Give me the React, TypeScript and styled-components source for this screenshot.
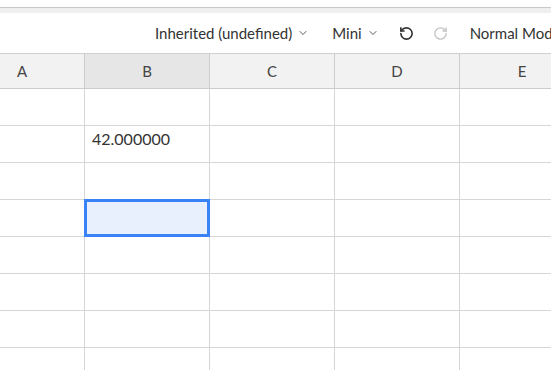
import React from 'react';
import styled, { createGlobalStyle } from 'styled-components';
import { ChevronDown, RotateCcw, RotateCw } from 'lucide-react';

const GlobalStyle = createGlobalStyle`
  html, body {
    margin: 0;
    padding: 0;
    background: #ffffff;
    overflow: hidden;
  }
  body {
    font-family: Lato, "Liberation Sans", sans-serif;
    color: #333333;
  }
`;

const Page = styled.div`
  width: 551px;
  height: 370px;
  overflow: hidden;
  display: flex;
  flex-direction: column;
`;

const TopStrip = styled.div`
  height: 7px;
  border-bottom: 1px solid #c9c9c9;
  background: #ffffff;
  flex-shrink: 0;
`;

const Band = styled.div`
  height: 5px;
  background: #efefef;
  flex-shrink: 0;
`;

const Toolbar = styled.div`
  height: 40px;
  flex-shrink: 0;
  display: flex;
  align-items: center;
  padding-left: 155px;
  white-space: nowrap;
  font-size: 15px;
  color: #333333;
  overflow: hidden;
`;

const Dropdown = styled.div<{ $gap: number }>`
  display: flex;
  align-items: center;
  gap: 5px;
  flex-shrink: 0;
  margin-right: ${(p) => p.$gap}px;
  svg {
    color: #444444;
  }
`;

const IconButton = styled.div<{ $disabled?: boolean; $gap: number }>`
  display: flex;
  align-items: center;
  flex-shrink: 0;
  margin-right: ${(p) => p.$gap}px;
  color: ${(p) => (p.$disabled ? '#c4c4c4' : '#333333')};
`;

const ModeLabel = styled.span`
  flex-shrink: 0;
`;

const Grid = styled.div`
  margin-left: -40px;
  display: grid;
  grid-template-columns: repeat(5, 125px);
  border-top: 1px solid #cfcfcf;
`;

const HeaderCell = styled.div<{ $active?: boolean }>`
  height: 34px;
  display: flex;
  align-items: center;
  justify-content: center;
  font-size: 15px;
  color: #444444;
  background: ${(p) => (p.$active ? '#e6e6e6' : '#f2f2f2')};
  border-right: 1px solid #cccccc;
  border-bottom: 1px solid #cccccc;
`;

const Cell = styled.div`
  height: 37px;
  box-sizing: border-box;
  display: flex;
  align-items: flex-start;
  padding: 3px 0 0 7px;
  font-size: 16px;
  color: #333333;
  border-right: 1px solid #d6d6d6;
  border-bottom: 1px solid #d6d6d6;
  position: relative;
`;

const Selection = styled.div`
  position: absolute;
  left: -1px;
  top: -1px;
  right: -1px;
  bottom: -1px;
  border: 3px solid #3a83f6;
  background: #e9f0fd;
`;

const columns = ['A', 'B', 'C', 'D', 'E'];
const rowCount = 8;

export default function App() {
  const rows = Array.from({ length: rowCount }, (_, r) => r);
  return (
    <>
      <GlobalStyle />
      <Page>
        <TopStrip />
        <Band />
        <Toolbar>
          <Dropdown $gap={23}>
            Inherited (undefined)
            <ChevronDown size={12} strokeWidth={1.8} />
          </Dropdown>
          <Dropdown $gap={20}>
            Mini
            <ChevronDown size={12} strokeWidth={1.8} />
          </Dropdown>
          <IconButton $gap={19}>
            <RotateCcw size={15} strokeWidth={2.6} />
          </IconButton>
          <IconButton $disabled $gap={22}>
            <RotateCw size={15} strokeWidth={2.2} />
          </IconButton>
          <ModeLabel>Normal Mode</ModeLabel>
        </Toolbar>
        <Grid>
          {columns.map((c) => (
            <HeaderCell key={c} $active={c === 'B'}>
              {c}
            </HeaderCell>
          ))}
          {rows.map((r) =>
            columns.map((c) => (
              <Cell key={`${c}${r}`}>
                {c === 'B' && r === 1 ? '42.000000' : ''}
                {c === 'B' && r === 3 ? <Selection /> : null}
              </Cell>
            ))
          )}
        </Grid>
      </Page>
    </>
  );
}
